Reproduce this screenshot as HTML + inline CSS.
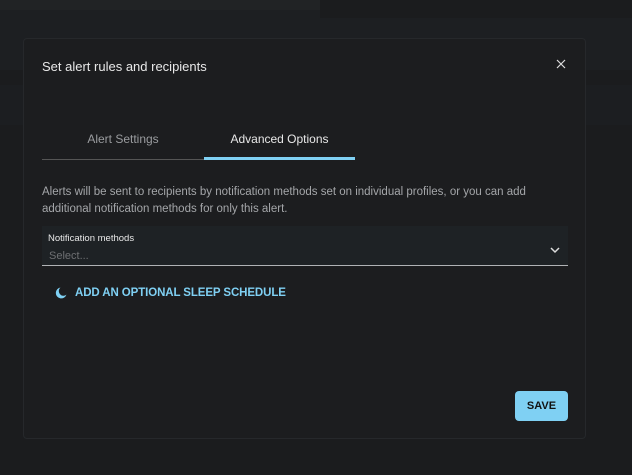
<!DOCTYPE html>
<html><head><style>
*{margin:0;padding:0;box-sizing:border-box}
body{width:632px;height:475px;background:#1b1c1e;font-family:"Liberation Sans",sans-serif;position:relative;overflow:hidden}
.bg1{position:absolute;left:0;top:0;width:320px;height:10px;background:#212325}
.bg2{position:absolute;left:0;top:10px;width:320px;height:60px;background:#1d1f22}
.bg3{position:absolute;left:320px;top:18px;width:312px;height:52px;background:#1d1f22}
.bg4{position:absolute;left:0;top:85px;width:632px;height:40px;background:#1c1e21}
.modal{position:absolute;left:23px;top:38px;width:563px;height:401px;background:#1c1d1f;border:1px solid #26282b;border-radius:4px}
.abs{position:absolute}
</style></head><body>
<div class="bg1"></div><div class="bg2"></div><div class="bg3"></div><div class="bg4"></div>
<div class="modal">
 <div class="abs" style="left:18px;top:20px;color:#e8e8e8;font-size:13px">Set alert rules and recipients</div>
 <svg class="abs" style="left:532px;top:20px" width="10" height="10" viewBox="0 0 10 10"><path d="M1 1L9 9M9 1L1 9" stroke="#ddd" stroke-width="1.2"/></svg>
 <div class="abs" style="left:18px;top:93px;width:162px;text-align:center;color:#9a9c9f;font-size:12px">Alert Settings</div>
 <div class="abs" style="left:180px;top:93px;width:151px;text-align:center;color:#e8e8e8;font-size:12px">Advanced Options</div>
 <div class="abs" style="left:18px;top:120px;width:162px;height:1px;background:#555"></div>
 <div class="abs" style="left:180px;top:118px;width:151px;height:3px;background:#7fd0f3"></div>
 <div class="abs" style="left:18px;top:145px;width:525px;color:#a4a6a9;font-size:11.5px;line-height:17px">Alerts will be sent to recipients by notification methods set on individual profiles, or you can add additional notification methods for only this alert.</div>
 <div class="abs" style="left:18px;top:187px;width:526px;height:40px;background:#1e2225;border-bottom:1px solid #b0b2b5">
  <div class="abs" style="left:6px;top:7px;color:#e8e8e8;font-size:9.5px">Notification methods</div>
  <div class="abs" style="left:7px;top:24px;color:#6e7073;font-size:11px">Select...</div>
  <svg class="abs" style="left:508px;top:20px" width="10" height="8" viewBox="0 0 10 8"><path d="M1 2L5 6L9 2" stroke="#ddd" stroke-width="1.5" fill="none"/></svg>
 </div>
 <svg class="abs" style="left:31px;top:248px" width="12" height="12" viewBox="0 0 11 11"><path d="M5 0.5A5 5 0 1 0 10.5 7A4 4 0 0 1 5 0.5Z" fill="#7fd0f3"/></svg>
 <div class="abs" style="left:51px;top:248px;color:#7fd0f3;font-size:11.5px;font-weight:bold;letter-spacing:-0.1px">ADD AN OPTIONAL SLEEP SCHEDULE</div>
 <div class="abs" style="left:491px;top:352px;width:53px;height:30px;background:#7fd0f3;border-radius:4px;color:#111;font-size:11px;font-weight:bold;text-align:center;line-height:30px">SAVE</div>
</div>
</body></html>
